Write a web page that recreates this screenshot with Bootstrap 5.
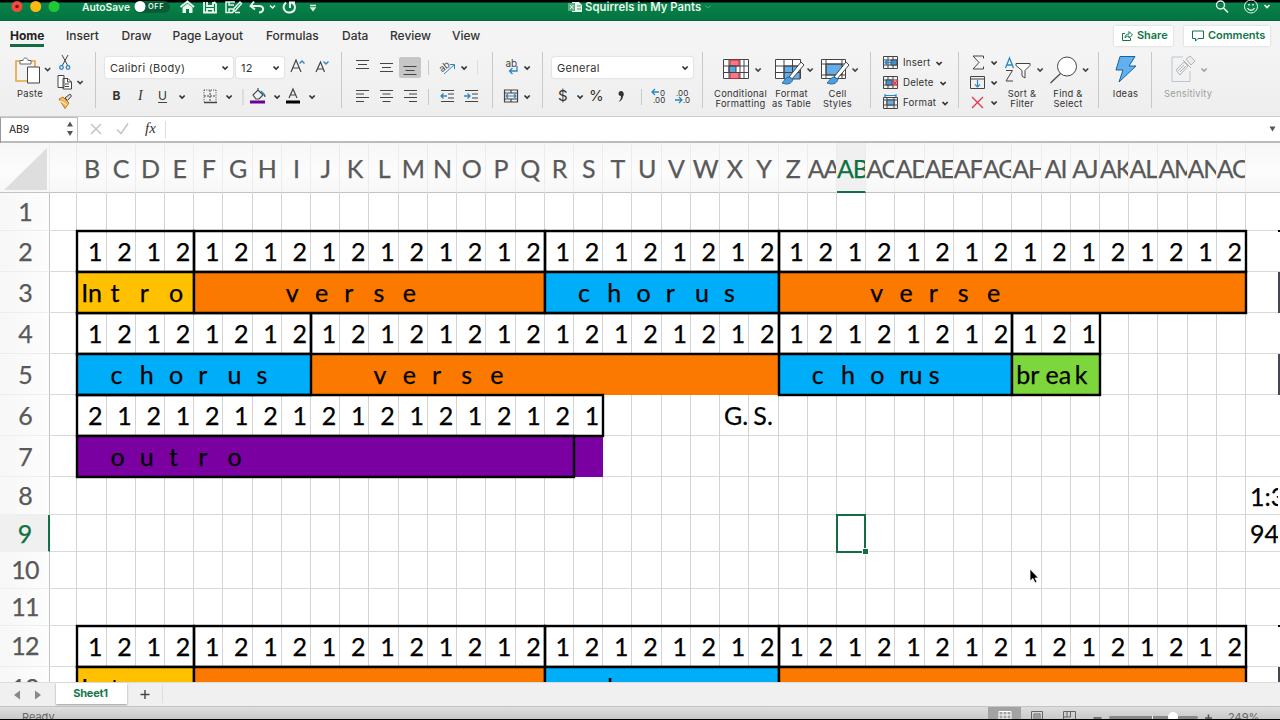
<!DOCTYPE html>
<html lang="en">
<head>
<meta charset="utf-8">
<title>Squirrels in My Pants</title>
<link href="https://cdn.jsdelivr.net/npm/bootstrap@5.3.0/dist/css/bootstrap.min.css" rel="stylesheet">
<style>
body{width:1280px;height:720px;overflow:hidden;font-family:Inter,"Liberation Sans",sans-serif;font-size:10px;line-height:1;color:#333;background:#fff}
svg{display:block;overflow:visible;fill:none;stroke:#444;stroke-width:1}
.titlebar{height:21px;background:linear-gradient(#000 0 2px,#08824a 3px,#04733f 20px,#035a31);color:#e8f6ee;display:grid;grid-template-columns:82px 52px 46px 388px 648px 64px;font-weight:600}
.titlebar svg{stroke:#e8f6ee;height:21px}
.titlebar .cap{padding-top:1.5px;font-size:10.3px;letter-spacing:0;white-space:nowrap}
.titlebar .cap.doc{font-size:11.3px;letter-spacing:.05px;padding-left:17px;position:relative}
.titlebar .cap.doc svg{position:absolute;left:0;top:0}
.tabs{height:29px;background:#f4f4f4;display:grid;grid-template-columns:56px 55.500px 51px 93.500px 76px 48px 62px 670px 70px 1fr;padding-left:10px;font-size:12px;font-weight:500;letter-spacing:-.02px;white-space:nowrap}
.tabs span{padding-top:8.500px}
.tabs .on{font-weight:700;color:#222}
.tabs .on i{display:block;width:34px;height:2.5px;background:#146c43;margin-top:2.500px}
.pill{height:20px;margin-top:4.5px;margin-left:-8px;background:#fff;color:#11754a;font-weight:600;font-size:11px;letter-spacing:-.05px;box-shadow:0 0 2px #bbb;border-radius:1px}
.pill svg{stroke:#11754a}
.share{width:59px}.comments{width:86px}
.ribbon{height:67px;background:linear-gradient(#f4f4f4,#eee);border-bottom:1px solid #cdcdcd}
.grp{padding-top:7px;height:66px;background:linear-gradient(#c9c9c9,#c9c9c9) no-repeat right 2px/1px 56px;flex:none}
.grp:last-child{background:none}
.line1,.line2{display:grid;height:21px;grid-template-rows:21px}
.line1 svg,.line2 svg{height:21px}
.line2{margin-top:8px}
.grp svg.c{stroke:#333;stroke-width:1.7}
.g1{width:95.500px;display:grid;grid-template-columns:56px 39px}
.g2{width:246.500px}.g3{width:151px}.g4{width:50px}.g5{width:160px}.g6{width:168px}.g7{width:88px}.g8{width:140px}.g9{width:53px}.g10{width:127px}
.fld{background:#fff;box-shadow:0 0 1.5px #aaa;border-radius:2px;padding:5.5px 5px;height:21px;font-size:11px;letter-spacing:.3px;position:relative;white-space:nowrap}
.fld svg{position:absolute;right:4px;top:0}
.g2 .line1{grid-template-columns:128px 3px 48px 6px 25px 20px;padding-left:9.500px}
.g2 .line2{grid-template-columns:24px 22px 18px 28px 24px 25px 23px 12px 23px 10px;padding-left:14px}
.g3 .line1,.g3 .line2{grid-template-columns:24px 19px 29px 12px 24px 20px;padding-left:14px}
.g4 .line1,.g4 .line2{grid-template-columns:19px 10px;padding-left:10px}
.g5 .line1{grid-template-columns:141px;padding-left:9px}
.g5 .line2{grid-template-columns:17px 14px 24px 23px 14px 26px 20px;padding-left:11px}
.hl{background:#c6c6c6;border-radius:2px;width:22px}
.glyph{font-size:15px;padding-top:2px;color:#333}
.lbl{font-size:9.4px;line-height:10.6px;text-align:center;letter-spacing:.25px;color:#333;white-space:nowrap}
.g6{display:grid;grid-template-columns:54px 52px 40px;padding-left:10.500px}
.big svg{height:31.500px;width:54px}
.g7 div,.g8 .st div{display:grid;height:20px;grid-template-columns:20px auto 10px 1fr;letter-spacing:.2px}
.g7 div,.g8 .st{margin-top:-5.500px}
.g7 div+div{margin-top:0}
.g7 div{padding-left:12px}
.g7 span{padding-top:6.500px;font-size:9.700px}
.g8{display:grid;grid-template-columns:40px 46px 46px}
.g8 .st div{grid-template-columns:20px 10px;padding-left:11px}
.fbar{height:24px;background:#fff;display:grid;grid-template-columns:78px 88px 1fr 12px;font-size:11px}
.fbar .nm{border:1.5px solid #bdbdbd;border-left-color:#999;padding:7px 8px;color:#222;font-size:10.5px;letter-spacing:-.2px;position:relative}
.fbar .nm svg{position:absolute;left:0;top:-1px}
.edge{height:2px;background:#bcbcbc}
/* worksheet: one track for row numbers, one for the part-hidden column A, forty narrow columns */
.sheet{height:539px;overflow:hidden;display:grid;position:relative;grid-template-columns:50px 27.3px repeat(40,29.22px) 1fr 2px;grid-template-rows:49.5px 38.7px 41px 41px 41px 41px 41px 41px 38.1px 36.7px 36.6px 37.2px 41.4px 41px;font-family:Lato,"Liberation Sans",sans-serif;font-size:25px;color:#000;-webkit-text-stroke:.25px}
.ce{border-right:1px solid #d3d3d3;border-bottom:1px solid #d9d9d9;white-space:nowrap;min-width:0}
.last{border-right:0}
.hd{background:linear-gradient(#f7f7f7,#fcfcfc 60%,#f7f7f7);color:#595959;text-align:center;overflow:hidden;border-right-color:#ececec;border-bottom-color:#c3c3c3;padding-top:13px;letter-spacing:-1.2px}
.rn{background:linear-gradient(90deg,#f7f7f7,#fdfdfd);color:#595959;text-align:center;border-right-color:#c3c3c3;border-bottom-color:#eee;display:flex;align-items:center;justify-content:center;letter-spacing:-.8px;padding-left:1px}
.sel{color:#0e7043;background:#f0f0f0;border-bottom:2px solid #0e7043}
.rn.sel{border-bottom:1px solid #eee;border-right:2px solid #0e7043}
.corner{padding:4px 2px 2px 4px}
.seg{box-shadow:0 0 0 1.2px #000,inset 0 0 0 1.2px #000;z-index:2}
.plainseg{box-shadow:none;z-index:1}
.tx{z-index:3;white-space:nowrap;display:flex;align-items:center;padding:0 0 0 4px;min-width:0}
.num{justify-content:flex-end;padding:0 4px 0 0}
.clip{overflow:hidden}
.yel{background:#ffc000}.ora{background:#fc7900}.blu{background:#00adf8}.gre{background:#7cd63c}.pur{background:#7a00a2}
.nextblk{background:#4a4453}.nexttop{border-top:2px solid #000;margin-top:-1px}
.pick{border:2px solid #146c43;z-index:4;margin:-1px 0 -1px -1px;position:relative}
.pick::after{content:"";position:absolute;right:-4px;bottom:-3px;width:5px;height:5px;background:#146c43;box-shadow:0 0 0 1px #fff}
.cursor{position:absolute;left:1029px;top:426px;z-index:5}
.tabsbar{height:25px;background:#f0f0f0;border-top:1px solid #ddd;border-bottom:1px solid #c4c4c4;display:grid;grid-template-columns:56px 71px 1fr}
.tabsbar .tb{height:21px;background:#fff;color:#14784a;font-weight:700;font-size:11px;text-align:center;padding:5px 2px 0 0;box-shadow:0 1px 2px #999;letter-spacing:-.25px}
.status{height:13px;overflow:hidden;background:linear-gradient(#dedede,#c9c9c9);border-bottom:1.5px solid #000;display:grid;grid-template-columns:988px 240px 1fr;color:#666;font-size:11px;line-height:13px;padding-top:4px}
.status svg{margin-top:-4px;height:13px}
.status .rd{padding-left:22px}
</style>
</head>
<body>
<svg width="0" height="0" class="position-absolute"><defs>
<path id="chev" d="M1.5 9.5l2.6 2.6 2.6-2.6"/>
<g id="brush"><path d="M25 -1L13 14l3 2L28 2z" fill="#fff" stroke="#444"/><path d="M13 14c-3 0-4 3-7 6 5 2 10 1 11-4z" fill="#4b9fe0" stroke="#286a9e"/></g>
</defs></svg>
<header class="titlebar">
<svg width="80"><g stroke="none"><circle cx="17" cy="6.5" r="5.5" fill="#f6493d"/><circle cx="17" cy="6.5" r="1.8" fill="#7c1510"/><circle cx="35.7" cy="6.5" r="5.5" fill="#fdb90f"/><circle cx="54" cy="6.5" r="5.5" fill="#1fc935"/></g></svg>
<span class="cap">AutoSave</span>
<svg width="40"><rect x="0" y="1" width="36" height="12" rx="6" fill="#075c35" stroke="none"/><circle cx="6" cy="6.5" r="5.5" fill="#fff" stroke="none"/><text x="14" y="9.3" font-size="7.5" fill="#e8f6ee" stroke="none" letter-spacing=".5">OFF</text></svg>
<svg width="150" stroke-width="1.8"><path d="M.5 7L7.500 1.5 14 7" stroke-width="2"/><path d="M2.500 7.500L7.500 3.500l5 4V13H9V9H6v4H2.500z" fill="#e8f6ee" stroke="none"/><path d="M24 2v10.500h12V4l-2-2M27 2v4h6V2M27 12V9h6v3" stroke-width="1.800"/><path d="M53 12.500h-7V2h9M49 2v3h5M49 12V9h4M53 12l1-3.500L60 2l1.500 1.500L56 10zM55 12.500h5" stroke-width="1.500"/><path d="M74 1.500L70.500 6 75 9.500M71 6h8c6 0 5 6 0 6.500" stroke-width="2"/><path d="M90 5.500l2.500 2.500L95 5.500" stroke-width="1.500"/><path d="M106 2.500c-5 5-1 10 3 10 7 0 8-8 2-10M110 8V2.500h5" stroke-width="2"/><path d="M130 5.500h6M131 8h4l-2 2.500z" stroke-width="1.300" fill="#e8f6ee"/></svg>
<span class="cap doc"><svg width="16"><path d="M4 2h7l3 3v7H4z" fill="#e8f6ee" stroke="none"/><path d="M0 3h7v8H0z" fill="#5cae84" stroke="none"/><path d="M2 5l3.500 4M5.500 5L2 9"/><path d="M9 6h4M9 9h4" stroke="#3f9b6c"/></svg>Squirrels in My Pants<svg width="148"><path d="M137 5.500l3 2.500 3-2.500" stroke="#4aa178"/></svg></span>
<svg width="60"><circle cx="4.500" cy="5" r="4" stroke-width="1.400"/><path d="M7.500 8l4.500 4.500" stroke-width="1.600"/><circle cx="35" cy="6.500" r="6.500"/><path d="M31.500 8c1.500 3 5.500 3 7 0" stroke-width="1.300"/><path d="M33 4v1.500M37 4v1.500M48.500 5l2.500 2.500L53.500 5" stroke-width="1.600"/></svg>
</header>
<nav class="tabs">
<span class="on">Home<i></i></span><span>Insert</span><span>Draw</span><span>Page Layout</span><span>Formulas</span><span>Data</span><span>Review</span><span>View</span>
<div class="pill share d-flex align-items-center"><svg class="mx-1 ms-2" width="11" height="11"><path d="M3 3.500H.500v7h8V8M3 8c0-3 2-4 4-4V1.500L10.500 5 7 8V6C5 6 4 7 3 8z"/></svg>Share</div>
<div class="pill comments d-flex align-items-center"><svg class="mx-1 ms-2" width="12" height="11"><path d="M.500 1h11v7.500H6L3.500 11V8.500h-3z"/></svg>Comments</div>
</nav>
<section class="ribbon d-flex">
<div class="grp g1">
<div><svg width="56" height="32"><path d="M21 4h-5v20h11M31 4h4v6" stroke="#e8a33a" stroke-width="1.600"/><path d="M20 7h11V3.500h-3C28 .200 23 .200 23 3.500h-3z" fill="#fff" stroke="#666"/><path d="M27.500 10h12v16h-12z" fill="#fff"/><use href="#chev" x="43.500" y="1.500" stroke-width="1.700"/></svg><div class="lbl ps-1">Paste</div></div>
<svg width="39" height="54"><path d="M6-2l6 11M12-2L6 9"/><g stroke="#2a87c4" stroke-width="1.300"><circle cx="5.500" cy="10.500" r="1.800"/><circle cx="12" cy="10.500" r="1.800"/></g><path d="M2 18.500h6v12H2zM7 21.500h5l3.500 3.500v7H7z" fill="#fff"/><path d="M11.500 21.500V25h4M9 27h4M9 29.500h4" /><use href="#chev" x="20" y="14.500" stroke-width="1.700"/><path d="M9 41l5-4 1.500 2-4 4.500z" fill="#ddd"/><path d="M3 42l4-2 6 6-4 5.500z" fill="#f5b758" stroke="#b87c22"/><path d="M4 44l7 4" stroke="#fff"/></svg>
</div>
<div class="grp g2">
<div class="line1"><div class="fld">Calibri (Body)<svg class="c" width="8"><use href="#chev"/></svg></div><b></b><div class="fld">12<svg class="c" width="8"><use href="#chev"/></svg></div><b></b><svg><path d="M1 15L6 3l5 12M3 11h6" stroke-width="1.200"/><path d="M9.500 6.500L12 4l2.500 2.500" stroke="#2a87c4" stroke-width="1.400"/></svg><svg><path d="M1 15L5.500 5l4 10M2.500 12h5.500" stroke-width="1.200"/><path d="M8.500 4.500L11 7l2.500-2.500" stroke="#2a87c4" stroke-width="1.400"/></svg></div>
<div class="line2"><svg><text x="2.500" y="14" font-size="12" font-weight="700" fill="#333" stroke="none">B</text></svg><svg><text x="4" y="14" font-size="14" font-style="italic" font-family="Liberation Serif" fill="#333" stroke="none">I</text></svg><svg><text x="2" y="13.500" font-size="12" fill="#333" stroke="none">U</text><path d="M2 16.500h9"/></svg><svg class="c"><use href="#chev" x="4"/></svg>
<svg><path d="M2 4h12M2 4v12M14 4v12" stroke-dasharray="1 1.300"/><path d="M2 10h12M8 4v12" stroke-dasharray="2 1"/><path d="M2 16.500h13" stroke-width="1.500"/></svg><svg class="c"><use href="#chev" x="-1"/><path d="M17 3v16" stroke="#c9c9c9" stroke-width="1"/></svg>
<svg><path d="M2 9l5-5 5 5-4 4H5zM7 4V2M12 7c2 2 2 3 2 4" stroke-width="1.100"/><path d="M10 5l3 4" stroke="#2a87c4" stroke-width="1.500"/><rect x="-1" y="14.500" width="15" height="3" fill="#69009b" stroke="none"/></svg><svg class="c"><use href="#chev" x="-1"/></svg>
<svg><path d="M3 12L7 3l4 9M4.500 9h5" stroke-width="1.200"/><rect x="0" y="14.500" width="14" height="3" fill="#000" stroke="none"/></svg><svg class="c"><use href="#chev" x="-1"/></svg></div>
</div>
<div class="grp g3">
<div class="line1"><svg><path d="M0 3.500h13M2 7.500h9M0 11.500h13"/></svg><svg><path d="M0 6.500h13M2 10.500h9M0 14.500h13"/></svg><div class="hl"><svg width="22"><path d="M4.500 9.500h13M6.500 13.500h9M4.500 17.500h13"/></svg></div><svg><path d="M.500 3v15" stroke="#c9c9c9"/></svg><svg><text x="-1" y="13" font-size="9.500" fill="#444" stroke="none" transform="rotate(-38 4 10)">ab</text><path d="M4 17L14 8M10 7.500h4.500V12" stroke="#2a87c4"/></svg><svg class="c"><use href="#chev" x="-4"/><path d="M13.500 3v15" stroke="#ddd" stroke-width="1"/></svg></div>
<div class="line2"><svg><path d="M0 4.500h13M0 8h8M0 11.500h13M0 15.500h8"/></svg><svg><path d="M0 4.500h13M2.500 8h8M0 11.500h13M2.500 15.500h8"/></svg><svg><path d="M5 4.500h13M10 8h8M5 11.500h13M10 15.500h8"/></svg><svg><path d="M.500 3v16" stroke="#c9c9c9"/></svg><svg><path d="M1 4.500h13M8 8h6M8 12h6M1 15.500h13"/><path d="M7 10H1M3.500 7.500L1 10l2.500 2.500" stroke="#2a87c4" stroke-width="1.300"/></svg><svg><path d="M1 4.500h13M8 8h6M8 12h6M1 15.500h13"/><path d="M0 10h6M3.500 7.500L6 10l-2.500 2.500" stroke="#2a87c4" stroke-width="1.300"/></svg></div>
</div>
<div class="grp g4">
<div class="line1"><svg><text x="2.500" y="10" font-size="10" fill="#444" stroke="none">ab</text><path d="M14 9v5H7M9.500 11L6.500 14l3 3" stroke="#2a87c4" stroke-width="1.300"/></svg><svg class="c"><use href="#chev" x="1"/></svg></div>
<div class="line2"><svg><path d="M1.500 4h13v12h-13zM1.500 7h13M1.500 13h13M8 4v3M8 13v3" stroke-width="1.200"/><path d="M3 10h10M5 8l-2 2 2 2M11 8l2 2-2 2" stroke="#2a87c4" stroke-width="1.200"/></svg><svg class="c"><use href="#chev" x="1"/></svg></div>
</div>
<div class="grp g5">
<div class="line1"><div class="fld">General<svg class="c" width="8"><use href="#chev"/></svg></div></div>
<div class="line2"><span class="glyph ps-1">$</span><svg class="c"><use href="#chev" x="5"/></svg><span class="glyph ps-1">%</span><svg><path d="M11 10.500c2-3 0-5.500-2-5.500-3 0-3.500 5 0 5 0 3-1 4.500-2.500 6 3-1 4-3 4.500-5.500z" fill="#333" stroke="none" transform="translate(3 0)"/></svg><svg><path d="M9.500 3v16" stroke="#c9c9c9"/></svg><svg><path d="M13 6H6M9 3L6 6l3 3" stroke="#2a87c4" stroke-width="1.300"/><text x="14" y="10" font-size="8" fill="#333" stroke="none">0</text><text x="7" y="17" font-size="8" fill="#333" stroke="none">.00</text></svg><svg><text x="4" y="10" font-size="8" fill="#333" stroke="none">.00</text><path d="M3 14h6M7 11l3 3-3 3" stroke="#2a87c4" stroke-width="1.300"/><text x="11" y="17" font-size="8" fill="#333" stroke="none">.0</text></svg></div>
</div>
<div class="grp g6">
<div class="big"><svg><path d="M9.500 2.500h25v19h-25z" fill="#fff"/><path d="M16 3h9v6h-9zM18 15.500h7v6h-9v-6z" fill="#f97886" stroke="#c5233f"/><path d="M15 9h7v6.500h-7z" fill="#58a6e4"/><path d="M9.500 9h25M9.500 15.500h25M15 2.500v19M26 2.500v19M30 2.500v19"/><use href="#chev" x="40" y="2" stroke-width="1.700"/></svg><div class="lbl">Conditional<br>Formatting</div></div>
<div class="big"><svg><path d="M7.500 2.500h25v19h-25z" fill="#fff"/><path d="M16 9h16v13H16z" fill="#66ace6"/><path d="M7.500 9h25M7.500 15.500h25M16 2.500v19M24.500 2.500v19"/><use href="#brush" x="8" y="6"/><use href="#chev" x="38" y="2" stroke-width="1.700"/></svg><div class="lbl pe-1">Format<br>as Table</div></div>
<div class="big"><svg><path d="M1.500 2.500h24v19h-24z" fill="#fff"/><path d="M6 7h16v11H6z" fill="#66ace6"/><path d="M1.500 7h24M1.500 18h24M6 2.500v19M22 2.500v19"/><use href="#brush" x="1" y="6"/><use href="#chev" x="31" y="2" stroke-width="1.700"/></svg><div class="lbl pe-1">Cell<br>Styles</div></div>
</div>
<div class="grp g7">
<div><svg><path d="M.500 4.500h14v12H.500zM.500 8h14M.500 13h14M5 4.500v12M10 4.500v12"/><path d="M8 8h6v5H8z" fill="#3c93d9"/><path d="M11 10.500H2M5 7.500l-3 3 3 3" stroke="#2a87c4" stroke-width="1.400"/></svg><span>Insert</span><b></b><svg class="c"><use href="#chev" x="-5" y=".500"/></svg></div>
<div><svg><path d="M.500 4.500h14v12H.500zM.500 8h14M.500 13h14M5 4.500v12M10 4.500v12"/><path d="M3 8h6v5H3z" fill="#3c93d9"/><path d="M9 8l6 6M15 8l-6 6" stroke="#e2364e" stroke-width="1.500"/></svg><span>Delete</span><b></b><svg class="c"><use href="#chev" x="-5" y=".500"/></svg></div>
<div><svg><path d="M.500 5.500h14v11H.500zM.500 8h14M.500 13h14M4 5.500v11M11 5.500v11"/><path d="M4 8h7v5H4z" fill="#66ace6"/><path d="M2 3.500h11M2 2v3M13 2v3" stroke="#2a87c4" stroke-width="1.200"/></svg><span>Format</span><b></b><svg class="c"><use href="#chev" x="-5" y=".500"/></svg></div>
</div>
<div class="grp g8">
<div class="st"><div><svg><path d="M13.500 6.500V4H3l6 6.500L3 17h10.500v-2.500"/></svg><svg class="c"><use href="#chev"/></svg></div><div><svg><path d="M.500 4.500h14v12H.500zM.500 7h14"/><path d="M7.500 8v7M5 12.500L7.500 15l2.500-2.500" stroke="#2a87c4" stroke-width="1.200"/></svg><svg class="c"><use href="#chev"/></svg></div><div><svg><path d="M2 5l11 11M13 5L2 16" stroke="#e2364e" stroke-width="1.300"/></svg><svg class="c"><use href="#chev"/></svg></div></div>
<div class="big"><svg><path d="M6.500 11L10.500 1l4 10M8 8h5" stroke="#2a87c4" stroke-width="1.300"/><path d="M7 13.500h6.500L7 24h7"/><path d="M17 6.500h14v2l-5 5V21l-3-2v-5.500l-6-5z" fill="#fff"/><use href="#chev" x="37" y="2" stroke-width="1.700"/></svg><div class="lbl">Sort &amp;<br>Filter</div></div>
<div class="big"><svg><circle cx="22" cy="9.500" r="9.500" fill="#fff"/><path d="M15.500 16.500L5.500 26" stroke-width="1.200"/><use href="#chev" x="36.500" y="2" stroke-width="1.700"/></svg><div class="lbl">Find &amp;<br>Select</div></div>
</div>
<div class="grp g9 big"><svg><path d="M13-.500h15L22 9h7L12 25l4-12H9z" transform="translate(8)" fill="#62b0ee" stroke="#1c5f9a"/></svg><div class="lbl">Ideas</div></div>
<div class="grp g10 big"><svg><g opacity=".5"><path d="M31 0H20v24.500h18V14" stroke="#7e9cb5"/><path d="M24 13l8-8 4 4-8 9z" stroke="#777"/><path d="M26 14l6-6M28 15l6-6M31 3l8 8M34 2l4-3 5 5-4 4z" stroke="#777" fill="#dfeaf2"/><use href="#chev" x="48" y="2" stroke="#555" stroke-width="1.700"/></g></svg><div class="lbl text-start ps-2 text-black-50 opacity-75"><span class="ms-1">Sensitivity</span></div></div>
</section>
<section class="fbar">
<div class="nm">AB9<svg width="76" height="22"><path d="M66 9.500l3-5 3 5zM66 14l3 5 3-5z" fill="#555" stroke="none"/></svg></div>
<svg width="88" height="24"><path d="M13 7l10 10M23 7L13 17M39 12.500l4 4 7-10" stroke="#c6c6c6" stroke-width="1.600"/><text x="67" y="16" font-family="Liberation Serif" font-style="italic" font-size="15" fill="#333" stroke="none">fx</text><path d="M87.500 4v17" stroke="#ddd"/></svg><span></span><svg width="12" height="24"><path d="M1.500 9.500h6l-3 5z" fill="#555" stroke="none"/></svg>
</section>
<div class="edge"></div>
<main class="sheet" id="sheet"><svg class="cursor" width="12" height="16"><path d="M1 0v12l3-2.500 2 4.500 2-1-2-4h3.500z" fill="#000" stroke="#fff" stroke-width=".8"/></svg></main>
<footer>
<div class="tabsbar"><svg width="56" height="24"><path d="M20 7.500v9l-6-4.500zM35 7.500v9l6-4.500z" fill="#888" stroke="none"/></svg><div class="tb">Sheet1</div><svg width="60" height="24"><path d="M13.500 11.500h9M18 7v9" stroke="#444" stroke-width="1.400"/><path d="M35.500 2v18" stroke="#ddd"/></svg></div>
<div class="status"><span class="rd">Ready</span><svg width="240"><rect width="33" height="13" fill="#a2a2a2" stroke="none"/><path d="M11 4.500h12v9M11 4.500v9M11 8h12M11 12h12M15 4v9M19 4v9" stroke="#fff"/><path d="M43.500 13V4.500h11V13M46 13V7h6v6M47 9h4M47 11h4M75.500 13V4.500h12V13M75.500 10h7V4.500M79 4.500V10" stroke="#666"/><path d="M105.500 11h8M217 11h7M220.500 7.500v6" stroke="#555" stroke-width="1.600"/><rect x="121" y="9" width="89" height="3" rx="1.500" fill="#888" stroke="none"/><path d="M164.500 9v3" stroke="#fff"/><circle cx="185" cy="10" r="5" fill="#fff" stroke="none"/></svg><span>249%</span></div>
</footer>
<script src="https://cdn.jsdelivr.net/npm/bootstrap@5.3.0/dist/js/bootstrap.bundle.min.js"></script>
<script>
const sheet = document.getElementById('sheet');
const put = (cls, row, col, text = '', span = 1) => {
  const el = document.createElement('div');
  el.className = cls;
  el.style.gridArea = `${row} / ${col} / span 1 / span ${span}`;
  el.textContent = text;
  sheet.append(el);
  return el;
};
const colName = n => n < 26 ? String.fromCharCode(65 + n) : 'A' + String.fromCharCode(39 + n);
put('ce hd corner', 1, 1).innerHTML = '<svg width="43" height="43"><path d="M43 1v42H0z" fill="#dedede" stroke="none"/></svg>';
put('ce hd', 1, 2);
for (let c = 1; c <= 40; c++) put('ce hd' + (c === 27 ? ' sel' : ''), 1, c + 2, colName(c));
put('ce hd last', 1, 43, '', 2);
for (let r = 1; r <= 13; r++) {
  put('ce rn' + (r === 9 ? ' sel' : ''), r + 1, 1, r);
  for (let c = 0; c <= 40; c++) put('ce', r + 1, c + 2);
  put('ce last', r + 1, 43, '', 2);
}
// [row, first column, width, colour, letters, letters' first column, first beat]
const song = [['yel',['In','t','r','o'],1,4,1],['ora',[...'verse'],5,12,8],['blu',[...'chorus'],17,8,18],['ora',[...'verse'],25,16,28]];
const blocks = [
  [4,1,8,'','',0,1],[4,9,16,'','',0,1],[4,25,8,'','',0,1],[4,33,3,'','',0,1],
  [5,1,8,'blu',[...'chorus'],2],[5,9,16,'ora plainseg',[...'verse'],11],[5,25,8,'blu',['c','h','o','ru','s'],26],[5,33,3,'gre',['br','ea','k'],33],
  [6,1,18,'','',0,2],
  [7,1,17,'pur',[...'outro'],2],[7,18,1,'pur plainseg','',0]
];
for (const top of [2, 12]) for (const [cls, letters, c, w, lc] of song)
  blocks.push([top, c, w, '', '', 0, 1], [top + 1, c, w, cls, letters, lc]);
for (const [r, c, w, cls, letters, lc, beat] of blocks) {
  put('seg ' + cls, r + 1, c + 2, '', w);
  if (beat) for (let i = 0; i < w; i++) put('tx num', r + 1, c + 2 + i, (i + beat + 1) % 2 + 1);
  else [...letters].forEach((t, i) => put('tx', r + 1, lc + 2 + i, t));
}
put('tx', 7, 25, 'G.'); put('tx', 7, 26, 'S.');
put('tx clip', 9, 43, '1:3'); put('tx clip', 10, 43, '94');
// the next block of the song begins at the window's right edge
put('nexttop', 3, 44); put('nexttop', 13, 44);
for (const r of [4, 6, 14]) put('nextblk', r, 44);
put('pick', 10, 29);
</script>
</body>
</html>
